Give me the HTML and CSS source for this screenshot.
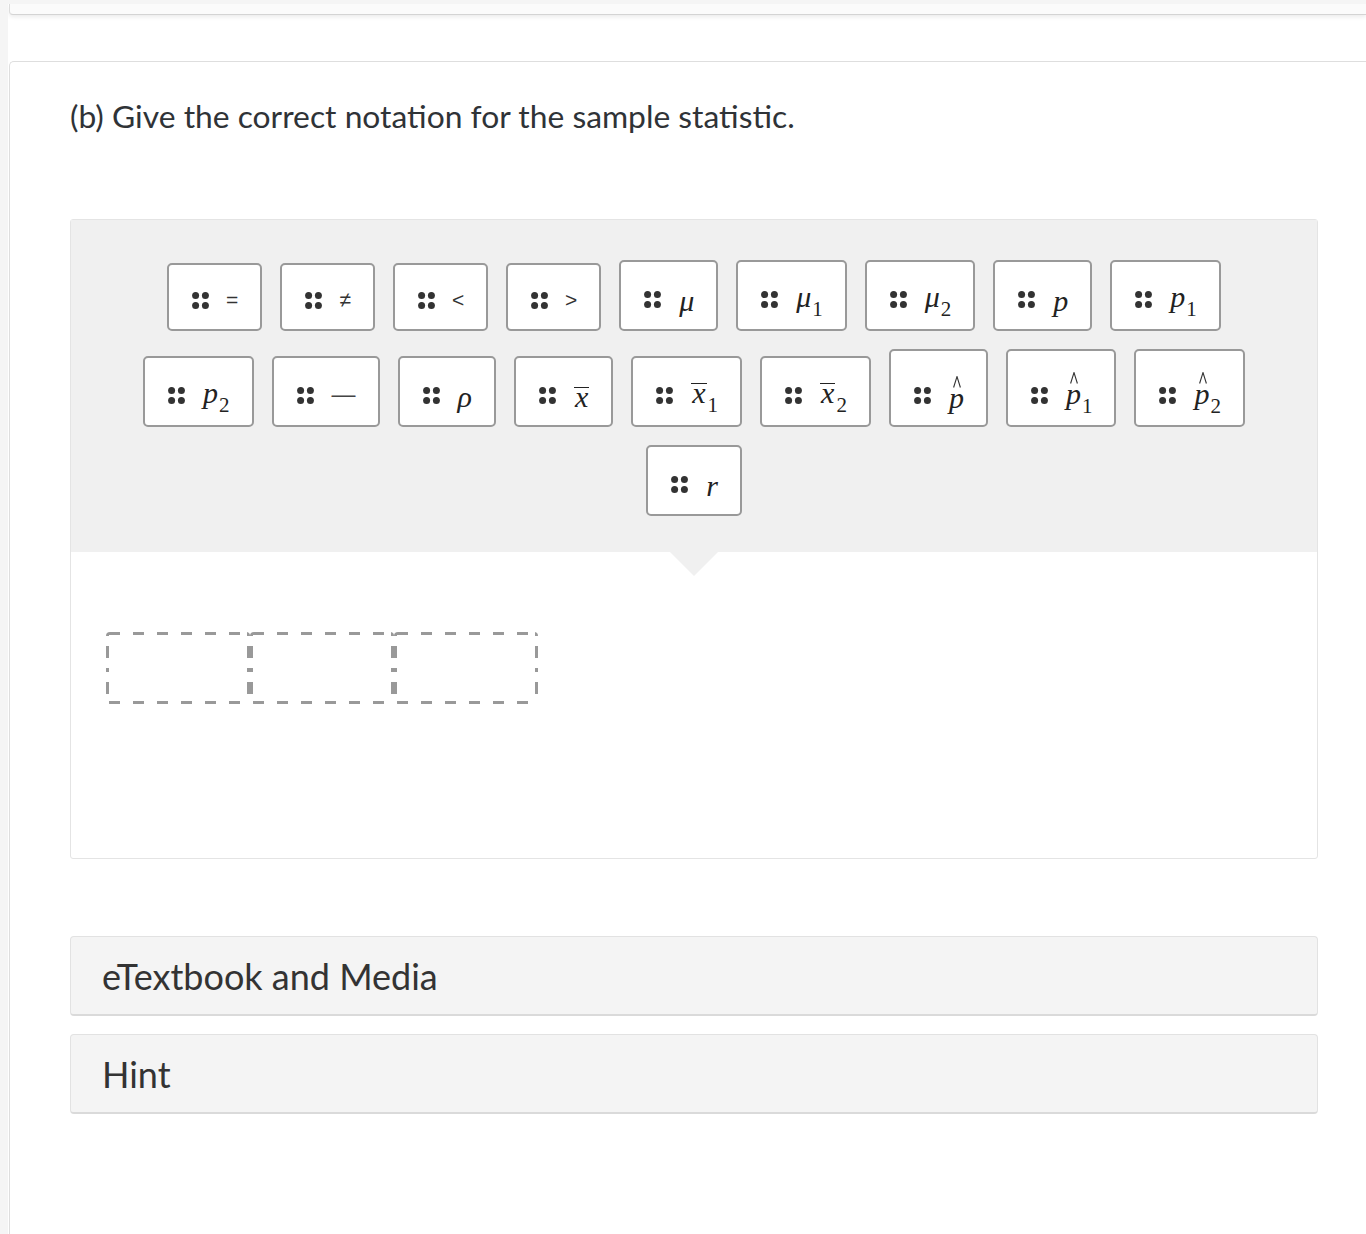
FILE: index.html
```html
<!DOCTYPE html>
<html lang="en">
<head>
<meta charset="utf-8">
<title>Sample statistic notation</title>
<link rel="stylesheet" href="styles.css">
</head>
<body>
<div class="page">
  <div class="prev-card"></div>
  <section class="card">
    <h2 class="prompt">(b) Give the correct notation for the sample statistic.</h2>
    <div class="question">
      <div class="palette">
        <div class="row">
          <div class="tile op"><svg class="grip" viewBox="0 0 17 17"><circle cx="3.6" cy="3.6" r="3.5"/><circle cx="13.4" cy="3.6" r="3.5"/><circle cx="3.6" cy="13.4" r="3.5"/><circle cx="13.4" cy="13.4" r="3.5"/></svg><span class="sym">=</span></div>
          <div class="tile op"><svg class="grip" viewBox="0 0 17 17"><circle cx="3.6" cy="3.6" r="3.5"/><circle cx="13.4" cy="3.6" r="3.5"/><circle cx="3.6" cy="13.4" r="3.5"/><circle cx="13.4" cy="13.4" r="3.5"/></svg><span class="sym">≠</span></div>
          <div class="tile op"><svg class="grip" viewBox="0 0 17 17"><circle cx="3.6" cy="3.6" r="3.5"/><circle cx="13.4" cy="3.6" r="3.5"/><circle cx="3.6" cy="13.4" r="3.5"/><circle cx="13.4" cy="13.4" r="3.5"/></svg><span class="sym">&lt;</span></div>
          <div class="tile op"><svg class="grip" viewBox="0 0 17 17"><circle cx="3.6" cy="3.6" r="3.5"/><circle cx="13.4" cy="3.6" r="3.5"/><circle cx="3.6" cy="13.4" r="3.5"/><circle cx="13.4" cy="13.4" r="3.5"/></svg><span class="sym">&gt;</span></div>
          <div class="tile"><svg class="grip" viewBox="0 0 17 17"><circle cx="3.6" cy="3.6" r="3.5"/><circle cx="13.4" cy="3.6" r="3.5"/><circle cx="3.6" cy="13.4" r="3.5"/><circle cx="13.4" cy="13.4" r="3.5"/></svg><span class="m"><i>μ</i></span></div>
          <div class="tile"><svg class="grip" viewBox="0 0 17 17"><circle cx="3.6" cy="3.6" r="3.5"/><circle cx="13.4" cy="3.6" r="3.5"/><circle cx="3.6" cy="13.4" r="3.5"/><circle cx="13.4" cy="13.4" r="3.5"/></svg><span class="m"><i>μ</i><sub>1</sub></span></div>
          <div class="tile"><svg class="grip" viewBox="0 0 17 17"><circle cx="3.6" cy="3.6" r="3.5"/><circle cx="13.4" cy="3.6" r="3.5"/><circle cx="3.6" cy="13.4" r="3.5"/><circle cx="13.4" cy="13.4" r="3.5"/></svg><span class="m"><i>μ</i><sub>2</sub></span></div>
          <div class="tile"><svg class="grip" viewBox="0 0 17 17"><circle cx="3.6" cy="3.6" r="3.5"/><circle cx="13.4" cy="3.6" r="3.5"/><circle cx="3.6" cy="13.4" r="3.5"/><circle cx="13.4" cy="13.4" r="3.5"/></svg><span class="m"><i>p</i></span></div>
          <div class="tile"><svg class="grip" viewBox="0 0 17 17"><circle cx="3.6" cy="3.6" r="3.5"/><circle cx="13.4" cy="3.6" r="3.5"/><circle cx="3.6" cy="13.4" r="3.5"/><circle cx="13.4" cy="13.4" r="3.5"/></svg><span class="m"><i>p</i><sub>1</sub></span></div>
        </div>
        <div class="row">
          <div class="tile"><svg class="grip" viewBox="0 0 17 17"><circle cx="3.6" cy="3.6" r="3.5"/><circle cx="13.4" cy="3.6" r="3.5"/><circle cx="3.6" cy="13.4" r="3.5"/><circle cx="13.4" cy="13.4" r="3.5"/></svg><span class="m"><i>p</i><sub>2</sub></span></div>
          <div class="tile"><svg class="grip" viewBox="0 0 17 17"><circle cx="3.6" cy="3.6" r="3.5"/><circle cx="13.4" cy="3.6" r="3.5"/><circle cx="3.6" cy="13.4" r="3.5"/><circle cx="13.4" cy="13.4" r="3.5"/></svg><span class="dash">—</span></div>
          <div class="tile"><svg class="grip" viewBox="0 0 17 17"><circle cx="3.6" cy="3.6" r="3.5"/><circle cx="13.4" cy="3.6" r="3.5"/><circle cx="3.6" cy="13.4" r="3.5"/><circle cx="13.4" cy="13.4" r="3.5"/></svg><span class="m"><i>ρ</i></span></div>
          <div class="tile"><svg class="grip" viewBox="0 0 17 17"><circle cx="3.6" cy="3.6" r="3.5"/><circle cx="13.4" cy="3.6" r="3.5"/><circle cx="3.6" cy="13.4" r="3.5"/><circle cx="13.4" cy="13.4" r="3.5"/></svg><span class="m"><span class="bar"><i>x</i></span></span></div>
          <div class="tile"><svg class="grip" viewBox="0 0 17 17"><circle cx="3.6" cy="3.6" r="3.5"/><circle cx="13.4" cy="3.6" r="3.5"/><circle cx="3.6" cy="13.4" r="3.5"/><circle cx="13.4" cy="13.4" r="3.5"/></svg><span class="m"><span class="bar"><i>x</i></span><sub>1</sub></span></div>
          <div class="tile"><svg class="grip" viewBox="0 0 17 17"><circle cx="3.6" cy="3.6" r="3.5"/><circle cx="13.4" cy="3.6" r="3.5"/><circle cx="3.6" cy="13.4" r="3.5"/><circle cx="13.4" cy="13.4" r="3.5"/></svg><span class="m"><span class="bar"><i>x</i></span><sub>2</sub></span></div>
          <div class="tile hatted"><svg class="grip" viewBox="0 0 17 17"><circle cx="3.6" cy="3.6" r="3.5"/><circle cx="13.4" cy="3.6" r="3.5"/><circle cx="3.6" cy="13.4" r="3.5"/><circle cx="13.4" cy="13.4" r="3.5"/></svg><span class="m"><span class="hat"><svg class="caret" viewBox="0 0 8 12"><polyline points="0.6,11.5 4,0.6 7.4,11.5"/></svg><i>p</i></span></span></div>
          <div class="tile hatted"><svg class="grip" viewBox="0 0 17 17"><circle cx="3.6" cy="3.6" r="3.5"/><circle cx="13.4" cy="3.6" r="3.5"/><circle cx="3.6" cy="13.4" r="3.5"/><circle cx="13.4" cy="13.4" r="3.5"/></svg><span class="m"><span class="hat"><svg class="caret" viewBox="0 0 8 12"><polyline points="0.6,11.5 4,0.6 7.4,11.5"/></svg><i>p</i></span><sub>1</sub></span></div>
          <div class="tile hatted"><svg class="grip" viewBox="0 0 17 17"><circle cx="3.6" cy="3.6" r="3.5"/><circle cx="13.4" cy="3.6" r="3.5"/><circle cx="3.6" cy="13.4" r="3.5"/><circle cx="13.4" cy="13.4" r="3.5"/></svg><span class="m"><span class="hat"><svg class="caret" viewBox="0 0 8 12"><polyline points="0.6,11.5 4,0.6 7.4,11.5"/></svg><i>p</i></span><sub>2</sub></span></div>
        </div>
        <div class="row">
          <div class="tile"><svg class="grip" viewBox="0 0 17 17"><circle cx="3.6" cy="3.6" r="3.5"/><circle cx="13.4" cy="3.6" r="3.5"/><circle cx="3.6" cy="13.4" r="3.5"/><circle cx="13.4" cy="13.4" r="3.5"/></svg><span class="m"><i>r</i></span></div>
        </div>
      </div>
      <div class="answer">
        <div class="dropzone">
          <div class="slot"></div>
          <div class="slot"></div>
          <div class="slot"></div>
        </div>
      </div>
    </div>
    <div class="accordion">eTextbook and Media</div>
    <div class="accordion">Hint</div>
  </section>
</div>
</body>
</html>
```

FILE: styles.css
```css
html, body {
  margin: 0;
}

body {
  background: #f5f5f5;
  padding: 4px 0 0 8px;
  font-family: Lato, "Liberation Sans", sans-serif;
  color: #333;
  overflow: hidden;
  height: 1234px;
  box-sizing: border-box;
}

.page {
  background: #fff;
  height: 100%;
  overflow: hidden;
}

.prev-card {
  height: 10px;
  margin-left: 1px;
  border-left: 1px solid #dcdcdc;
  border-bottom: 1px solid #d4d4d4;
  border-bottom-left-radius: 4px;
  background: #fbfbfb;
  box-shadow: 0 2px 4px rgba(0, 0, 0, 0.08);
}

.card {
  box-sizing: border-box;
  margin-top: 46px;
  margin-left: 1px;
  border-top: 1px solid #dedede;
  border-left: 1px solid #dedede;
  border-top-left-radius: 5px;
  padding: 35px 0 0 60px;
  height: 1173px;
}

.prompt {
  margin: 0;
  font-size: 31.8px;
  font-weight: 400;
  line-height: 38px;
  color: #2f3337;
}

.question {
  margin-top: 84px;
  width: 1248px;
  box-sizing: border-box;
  border: 1px solid #e4e4e4;
  border-radius: 3px;
}

.palette {
  position: relative;
  background: #f0f0f0;
  padding: 40px 0 36px;
  display: flex;
  flex-direction: column;
  align-items: center;
  gap: 18px;
}

.palette::after {
  content: "";
  position: absolute;
  top: 100%;
  left: 50%;
  margin-left: -24px;
  border-top: 24px solid #f0f0f0;
  border-left: 24px solid transparent;
  border-right: 24px solid transparent;
}

.row {
  display: flex;
  justify-content: center;
  align-items: flex-end;
  gap: 18px;
}

.tile {
  box-sizing: border-box;
  height: 71px;
  display: flex;
  align-items: center;
  gap: 18px;
  padding: 0 22px 0 23px;
  background: #fff;
  border: 2px solid #999;
  border-radius: 5px;
}

.tile.op {
  height: 68px;
  gap: 16px;
  padding-right: 21px;
}

.tile.hatted {
  height: 78px;
  padding-top: 8px;
}

.grip {
  width: 17px;
  height: 17px;
  fill: #333;
  flex: none;
  margin-top: 7px;
}

.sym {
  font-family: "Liberation Sans", "DejaVu Sans", sans-serif;
  font-size: 21px;
  line-height: 1;
  min-width: 14px;
  text-align: center;
  color: #333;
  margin-top: 4px;
}

.dash {
  font-family: "Liberation Sans", sans-serif;
  font-size: 24px;
  line-height: 1;
  color: #444;
  font-weight: 300;
  margin-top: 4px;
}

.m {
  display: inline-block;
  font-family: "Liberation Serif", "Times New Roman", "DejaVu Serif", serif;
  font-size: 30px;
  line-height: 30px;
  color: #222;
  white-space: nowrap;
  margin-top: 11px;
}

.m i {
  font-family: "Liberation Serif", "Times New Roman", "DejaVu Serif", serif;
  font-style: italic;
}

.m sub {
  font-family: "Liberation Serif", "Times New Roman", "DejaVu Serif", serif;
  font-size: 21px;
  line-height: 1;
  vertical-align: -9px;
  margin-left: 1px;
}

.bar {
  display: inline-block;
  line-height: 0.6;
  border-top: 1.5px solid #222;
  padding: 0 1px;
}

.hat {
  position: relative;
  display: inline-block;
}

.caret {
  position: absolute;
  left: 50%;
  top: -7px;
  width: 8px;
  height: 12px;
  margin-left: -3px;
  fill: none;
  stroke: #333;
  stroke-width: 1.1;
}

.answer {
  height: 306px;
  box-sizing: border-box;
  padding: 80px 0 0 35px;
}

.dropzone {
  display: flex;
}

.slot {
  width: 144px;
  height: 72px;
  box-sizing: border-box;
  background:
    repeating-linear-gradient(90deg, #999 0 11px, transparent 11px 24px) 3px 0 / calc(100% - 6px) 3px no-repeat,
    repeating-linear-gradient(90deg, #999 0 11px, transparent 11px 24px) 3px 100% / calc(100% - 6px) 3px no-repeat,
    repeating-linear-gradient(180deg, #999 0 4px, transparent 4px 14px, #999 14px 26px, transparent 26px 36px) 0 0 / 3px 100% no-repeat,
    repeating-linear-gradient(180deg, #999 0 4px, transparent 4px 14px, #999 14px 26px, transparent 26px 36px) 100% 0 / 3px 100% no-repeat;
  border-radius: 4px;
}

.accordion {
  width: 1248px;
  box-sizing: border-box;
  height: 80px;
  display: flex;
  align-items: center;
  padding-left: 31px;
  background: #f4f4f4;
  border: 1px solid #e2e2e2;
  border-bottom: 2px solid #dadada;
  border-radius: 4px;
  font-size: 36px;
  color: #333;
}

.question + .accordion {
  margin-top: 77px;
}

.accordion + .accordion {
  margin-top: 18px;
}
```
